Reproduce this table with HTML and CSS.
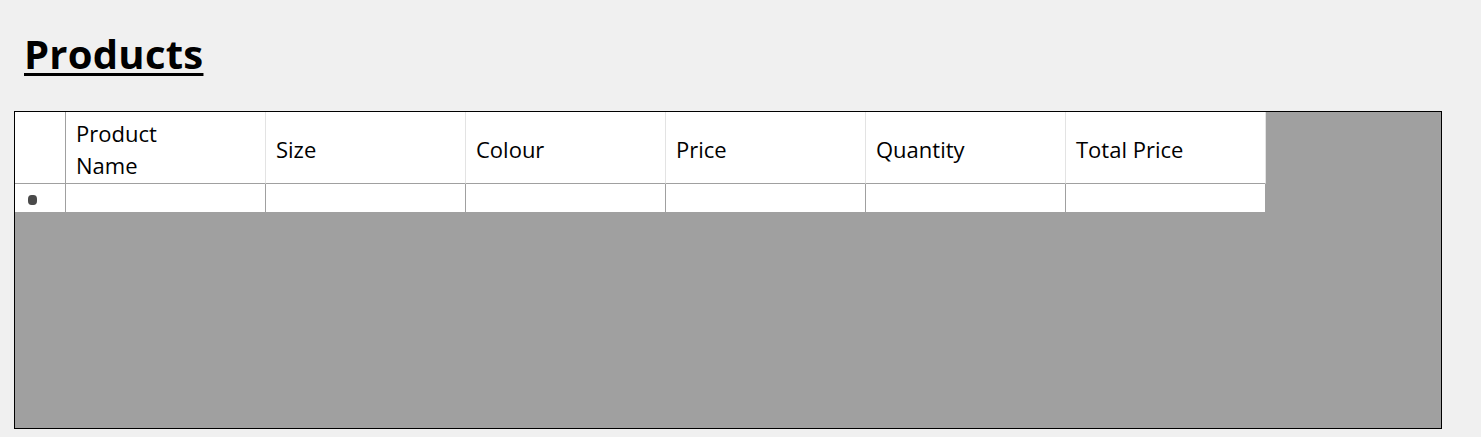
FILE: index.html
```html
<!DOCTYPE html>
<html>
<head>
<meta charset="utf-8">
<link rel="stylesheet" href="styles.css">
</head>
<body>
<h1 class="title">Products</h1>
<div class="dgv">
  <div class="grid">
    <div class="hcell corner"></div>
    <div class="hcell">Product<br>Name</div>
    <div class="hcell">Size</div>
    <div class="hcell">Colour</div>
    <div class="hcell">Price</div>
    <div class="hcell">Quantity</div>
    <div class="hcell">Total Price</div>
    <div class="rowhead"><span class="dot"></span></div>
    <div class="cell"></div>
    <div class="cell"></div>
    <div class="cell"></div>
    <div class="cell"></div>
    <div class="cell"></div>
    <div class="cell"></div>
  </div>
</div>
</body>
</html>
```
FILE: styles.css
```css
html, body {
  margin: 0;
  padding: 0;
  background: #f0f0f0;
}
body {
  font-family: "Open Sans", "Noto Sans", sans-serif;
  color: #000;
  padding: 24px 0 0 0;
}
.title {
  margin: 0 0 0 24px;
  font-size: 40px;
  font-weight: 700;
  letter-spacing: 0.25px;
  line-height: 60px;
  height: 87px;
  text-decoration: underline;
  text-decoration-thickness: 3px;
  text-underline-offset: 4px;
}
.dgv {
  margin-left: 14px;
  width: 1428px;
  height: 318px;
  box-sizing: border-box;
  border: 1px solid #000;
  background: #a0a0a0;
}
.grid {
  display: grid;
  grid-template-columns: 51px repeat(6, 200px);
  grid-template-rows: 72px 29px;
  width: 1251px;
}
.hcell {
  background: #fff;
  border-right: 1px solid #e3e3e3;
  border-bottom: 1px solid #a0a0a0;
  display: flex;
  align-items: center;
  padding-left: 10px;
  padding-top: 2px;
  font-size: 22px;
  line-height: 32px;
}
.hcell.corner {
  border-right-color: #a0a0a0;
  padding-left: 0;
}
.rowhead {
  background: #fff;
  border-right: 1px solid #a0a0a0;
  border-bottom: 1px solid #a0a0a0;
  display: flex;
  align-items: center;
  padding-left: 13px;
  padding-top: 3px;
}
.dot {
  width: 9px;
  height: 10px;
  border-radius: 40%;
  background: #4a4a4a;
}
.cell {
  background: #fff;
  border-right: 1px solid #a0a0a0;
  border-bottom: 1px solid #a0a0a0;
}
```
